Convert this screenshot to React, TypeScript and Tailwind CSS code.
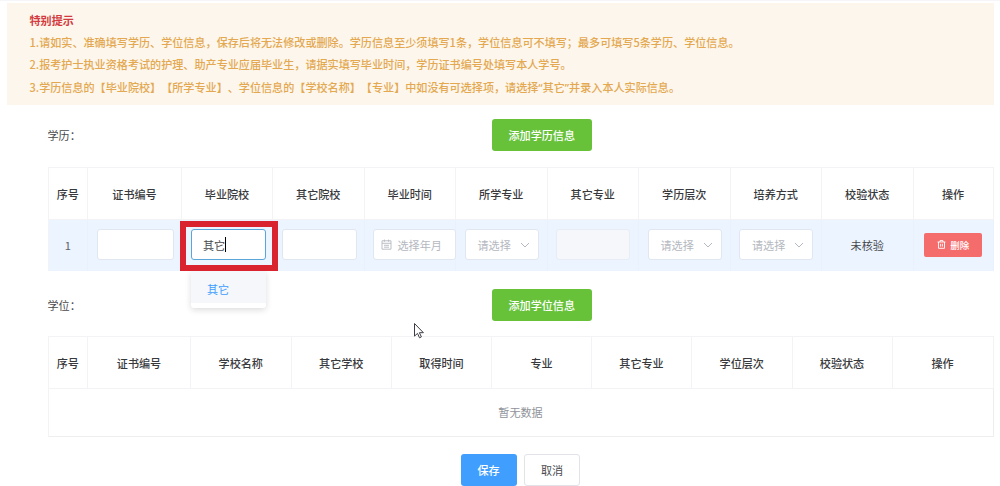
import type { ReactNode } from 'react';

const tips = [
  <>1.请如实、准确填写学历、学位信息，保存后将无法修改或删除。学历信息至少须填写1条，学位信息可不填写；最多可填写5条学历、学位信息。</>,
  <>2.报考护士执业资格考试的护理、助产专业应届毕业生，请据实填写毕业时间，学历证书编号处填写本人学号。</>,
  <>3.学历信息的【毕业院校】【所学专业】、学位信息的【学校名称】【专业】中如没有可选择项，请选择<Quote>“</Quote>其它<Quote>”</Quote>并录入本人实际信息。</>,
];

const educationHeaders = ['序号', '证书编号', '毕业院校', '其它院校', '毕业时间', '所学专业', '其它专业', '学历层次', '培养方式', '校验状态', '操作'];
const degreeHeaders = ['序号', '证书编号', '学校名称', '其它学校', '取得时间', '专业', '其它专业', '学位层次', '校验状态', '操作'];

function Quote({ children }: { children: ReactNode }) {
  return <span className="font-['Noto_Sans']">{children}</span>;
}

function HeaderCell({ label }: { label: string }) {
  return (
    <div className="flex items-center justify-center border-r border-b border-[#f3f3f5] pt-[2px] font-medium text-[#38393c]">
      {label}
    </div>
  );
}

function Cell({ children, className = '' }: { children?: ReactNode; className?: string }) {
  return <div className={`flex items-center border-r border-[#e8f1fc] pb-px ${className}`}>{children}</div>;
}

function ChevronDown() {
  return (
    <svg className="h-[6px] w-[10px] shrink-0" viewBox="0 0 10 6" fill="none" stroke="#b4b8c0" strokeWidth="1">
      <path d="M1 1l4 4 4-4" />
    </svg>
  );
}

function Select() {
  return (
    <div className="flex h-[31px] w-[74px] items-center justify-between rounded-[3px] border border-[#e1e7f0] bg-white pr-[8px] pl-[12px] text-[#b4b8c0]">
      <span>请选择</span>
      <ChevronDown />
    </div>
  );
}

function CalendarIcon() {
  return (
    <svg className="h-[11px] w-[11px] shrink-0" viewBox="0 0 11 11" fill="none" stroke="#b4b8c0" strokeWidth="0.9">
      <path d="M1 1.8h9v8.4H1zM1 4.3h9M3.4 0.6v2.2M7.6 0.6v2.2M3 6.3h5M3 8.2h5" />
    </svg>
  );
}

function TrashIcon() {
  return (
    <svg className="h-[9px] w-[9px]" viewBox="0 0 9 9" fill="none" stroke="white" strokeWidth="0.9">
      <path d="M0.5 2h8M3 2V0.6h3V2M1.5 2v6.3h6V2M3.6 3.8v2.8M5.4 3.8v2.8" />
    </svg>
  );
}

function SectionBar({ label, action }: { label: string; action: string }) {
  return (
    <div className="ml-[47.5px] flex h-[32px] items-center">
      <span className="w-[444px] text-[#48494c]">{label}</span>
      <button className="h-[32px] w-[100.5px] rounded-[3px] bg-[#67c23a] font-medium text-white">{action}</button>
    </div>
  );
}

export default function App() {
  return (
    <div className="flex h-[486px] w-[1000px] flex-col overflow-hidden border-t border-[#f6f5f8] bg-white font-['Noto_Sans_CJK_SC',sans-serif] text-[11.1px] leading-[16px]">
      <div className="mt-[2px] mr-[6.5px] ml-[7px] h-[101.5px] shrink-0 bg-[#fdf6ec] pt-[6px] pl-[22.5px] leading-[22.2px] font-medium whitespace-nowrap text-[#e3a850] [text-spacing-trim:space-all]">
        <p className="font-bold text-[#d33a3f]">特别提示</p>
        {tips.map((tip, i) => (
          <p key={i}>{tip}</p>
        ))}
      </div>

      <div className="mt-[14.5px]">
        <SectionBar label="学历：" action="添加学历信息" />
      </div>

      <div className="mt-[16px] ml-[47.5px] w-[946px] shrink-0 border-t border-l border-[#f3f3f5]">
        <div className="grid h-[51.5px] grid-cols-[39.5px_94px_91px_91.5px_91.5px_91.5px_91.5px_91.5px_91.5px_91.5px_80px]">
          {educationHeaders.map((h) => (
            <HeaderCell key={h} label={h} />
          ))}
        </div>
        <div className="grid h-[51.5px] grid-cols-[39.5px_94px_91px_91.5px_91.5px_91.5px_91.5px_91.5px_91.5px_91.5px_80px] bg-[#ebf4ff]">
          <Cell className="justify-center text-[#606266]">1</Cell>
          <Cell className="pl-[8.5px]">
            <div className="h-[31px] w-[77px] rounded-[3px] border border-[#e1e7f0] bg-white" />
          </Cell>
          <Cell className="relative pl-[8.5px]">
            <div className="flex h-[31px] w-[75px] items-center rounded-[3px] border border-[#5ba6d8] bg-white pl-[11.5px] text-[#48494c]">
              <span>其它</span>
              <span className="h-[15px] w-px bg-black" />
            </div>
            <div className="absolute top-[1px] left-[-2px] z-10 h-[50px] w-[97.5px] border-6 border-[#d9232e]" />
            <div className="absolute top-[51.5px] left-[8.5px] h-[37px] w-[75px] rounded-b-[3px] bg-white pb-[5.5px] shadow-[0_2px_6px_rgba(0,0,0,0.14)]">
              <div className="flex h-full items-center bg-[#f5f7fa] pt-[4px] pl-[16.5px] text-[#409eff]">其它</div>
            </div>
          </Cell>
          <Cell className="pl-[8.5px]">
            <div className="h-[31px] w-[75px] rounded-[3px] border border-[#e1e7f0] bg-white" />
          </Cell>
          <Cell className="pl-[8.5px]">
            <div className="flex h-[31px] w-[83px] shrink-0 items-center gap-[5.5px] rounded-[3px] border border-[#e1e7f0] bg-white pl-[7px] text-[#b4b8c0]">
              <CalendarIcon />
              <span>选择年月</span>
            </div>
          </Cell>
          <Cell className="pl-[8.5px]">
            <Select />
          </Cell>
          <Cell className="pl-[8.5px]">
            <div className="h-[31px] w-[74px] rounded-[3px] border border-[#e8edf5] bg-[#f5f7fa]" />
          </Cell>
          <Cell className="pl-[8.5px]">
            <Select />
          </Cell>
          <Cell className="pl-[8.5px]">
            <Select />
          </Cell>
          <Cell className="justify-center text-[#48494c]">未核验</Cell>
          <Cell className="justify-center">
            <button className="flex h-[23.5px] w-[58px] items-center justify-center gap-[4.5px] rounded-[2px] bg-[#f56c6c] text-[9.5px] font-medium text-white">
              <TrashIcon />
              删除
            </button>
          </Cell>
        </div>
      </div>

      <div className="mt-[17.5px]">
        <SectionBar label="学位：" action="添加学位信息" />
      </div>

      <div className="mt-[15.5px] ml-[47.5px] w-[946px] shrink-0 border-t border-l border-[#f3f3f5]">
        <div className="grid h-[51.5px] grid-cols-[39.5px_103px_100.5px_100.5px_100px_100px_100px_100.5px_100px_101px]">
          {degreeHeaders.map((h) => (
            <HeaderCell key={h} label={h} />
          ))}
        </div>
        <div className="flex h-[48px] items-center justify-center border-r border-b border-[#eeeef0] text-[#909399]">暂无数据</div>
      </div>

      <div className="mt-[17px] ml-[460.5px] flex shrink-0 gap-[7.5px]">
        <button className="h-[32px] w-[56px] rounded-[3px] bg-[#409eff] font-medium text-white">保存</button>
        <button className="h-[32px] w-[56px] rounded-[3px] border border-[#e1e3e9] text-[#48494c]">取消</button>
      </div>

      <svg className="absolute top-[322px] left-[413px] h-[17px] w-[12px]" viewBox="0 0 12 17" fill="white" stroke="#3c3c44" strokeWidth="1">
        <path d="M1.5 1.5v12.6l3-2.7 2 4.4 1.9-.9-2-4.2h4z" />
      </svg>
    </div>
  );
}
